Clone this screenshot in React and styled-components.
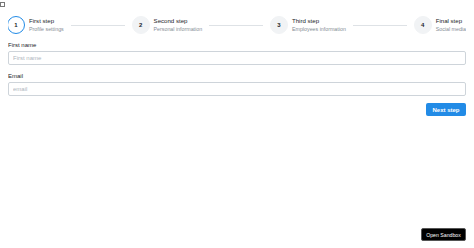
import React from 'react';
import styled, { createGlobalStyle } from 'styled-components';

const GlobalStyle = createGlobalStyle`
	body {
		margin: 8px;
		background: #fff;
		font-family: 'Liberation Sans', Arial, sans-serif;
		color: #000;
	}
`;

const BrokenImage = styled.span`
	position: absolute;
	top: 2px;
	left: 0;
	width: 5px;
	height: 5px;
	border: 1px solid #777;
	box-sizing: border-box;
`;

const Stepper = styled.div`
	display: flex;
	align-items: center;
	margin-top: 8px;
	margin-left: -1px;
`;

const Step = styled.div`
	display: flex;
	align-items: center;
	flex: none;
`;

const StepIcon = styled.div`
	width: 18px;
	height: 18px;
	box-sizing: border-box;
	border-radius: 50%;
	display: flex;
	align-items: center;
	justify-content: center;
	font-size: 6px;
	font-weight: 700;
	color: #212529;
	background: ${props => (props.active ? '#fff' : '#f1f3f5')};
	border: 1px solid ${props => (props.active ? '#228be6' : '#f1f3f5')};
`;

const StepBody = styled.div`
	margin-left: 4px;
	display: flex;
	flex-direction: column;
`;

const StepLabel = styled.div`
	font-size: 6.1px;
	font-weight: 500;
	line-height: 8px;
	color: #212529;
`;

const StepDescription = styled.div`
	font-size: 5.3px;
	line-height: 7px;
	margin-top: 1px;
	color: #868e96;
`;

const Separator = styled.div`
	flex: 1;
	height: 1px;
	background: #dee2e6;
	margin: 0 7px;
`;

const Content = styled.div`
	padding-top: 7px;
`;

const Field = styled.div`
	display: flex;
	flex-direction: column;
	margin-bottom: 7px;
`;

const Label = styled.label`
	font-size: 6px;
	font-weight: 500;
	line-height: 8px;
	color: #212529;
	margin-bottom: 2px;
`;

const Input = styled.input`
	height: 14px;
	box-sizing: border-box;
	border: 1px solid #ced4da;
	border-radius: 2px;
	padding: 0 4px;
	font-family: inherit;
	font-size: 6px;
	outline: none;
	&::placeholder {
		color: #adb5bd;
	}
`;

const Footer = styled.div`
	display: flex;
	justify-content: flex-end;
`;

const NextButton = styled.button`
	height: 13px;
	width: 40px;
	padding: 0;
	border: none;
	border-radius: 2px;
	background: #228be6;
	color: #fff;
	font-family: inherit;
	font-size: 6px;
	font-weight: 700;
`;

const SandboxButton = styled.button`
	position: fixed;
	right: 8px;
	bottom: 7px;
	height: 13px;
	width: 45px;
	padding: 0;
	background: #000;
	color: #fff;
	border: 1px solid #555;
	border-radius: 2px;
	font-family: inherit;
	font-size: 5.2px;
`;

const steps = [
	{ label: 'First step', description: 'Profile settings' },
	{ label: 'Second step', description: 'Personal information' },
	{ label: 'Third step', description: 'Employees information' },
	{ label: 'Final step', description: 'Social media' },
];

export default function App() {
	return (
		<>
			<GlobalStyle />
			<BrokenImage />
			<Stepper>
				{steps.map((step, i) => (
					<React.Fragment key={i}>
						{i > 0 && <Separator />}
						<Step>
							<StepIcon active={i === 0}>{i + 1}</StepIcon>
							<StepBody>
								<StepLabel>{step.label}</StepLabel>
								<StepDescription>{step.description}</StepDescription>
							</StepBody>
						</Step>
					</React.Fragment>
				))}
			</Stepper>
			<Content>
				<Field>
					<Label>First name</Label>
					<Input placeholder='First name' />
				</Field>
				<Field>
					<Label>Email</Label>
					<Input placeholder='email' />
				</Field>
				<Footer>
					<NextButton>Next step</NextButton>
				</Footer>
			</Content>
			<SandboxButton>Open Sandbox</SandboxButton>
		</>
	);
}
